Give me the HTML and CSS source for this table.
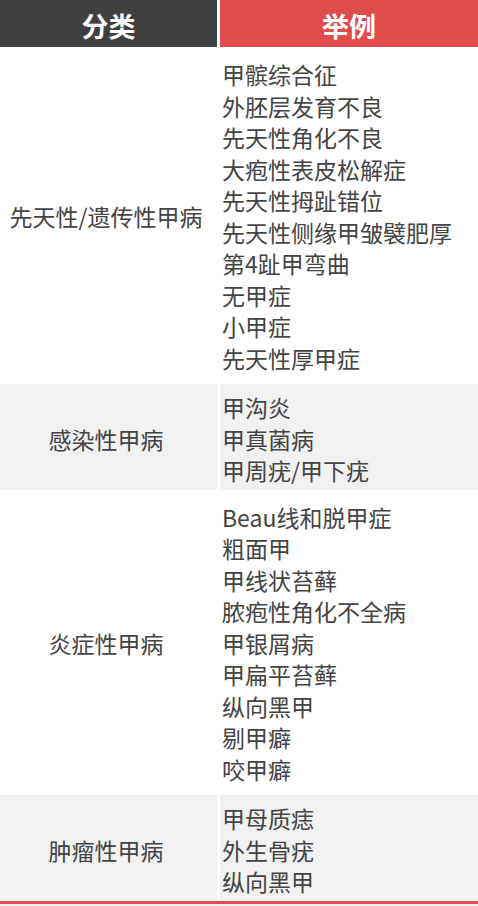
FILE: index.html
```html
<!DOCTYPE html>
<html lang="zh-CN">
<head>
<meta charset="utf-8">
<title>甲病分类</title>
<link rel="stylesheet" href="styles.css">
</head>
<body>
<div class="table">
  <div class="row head">
    <div class="cell cat">分类</div>
    <div class="cell ex">举例</div>
  </div>
  <div class="row long">
    <div class="cell cat">先天性/遗传性甲病</div>
    <div class="cell ex">
      <div>甲髌综合征</div>
      <div>外胚层发育不良</div>
      <div>先天性角化不良</div>
      <div>大疱性表皮松解症</div>
      <div>先天性拇趾错位</div>
      <div>先天性侧缘甲皱襞肥厚</div>
      <div>第4趾甲弯曲</div>
      <div>无甲症</div>
      <div>小甲症</div>
      <div>先天性厚甲症</div>
    </div>
  </div>
  <div class="row short alt">
    <div class="cell cat">感染性甲病</div>
    <div class="cell ex">
      <div>甲沟炎</div>
      <div>甲真菌病</div>
      <div>甲周疣/甲下疣</div>
    </div>
  </div>
  <div class="row long">
    <div class="cell cat">炎症性甲病</div>
    <div class="cell ex">
      <div>Beau线和脱甲症</div>
      <div>粗面甲</div>
      <div>甲线状苔藓</div>
      <div>脓疱性角化不全病</div>
      <div>甲银屑病</div>
      <div>甲扁平苔藓</div>
      <div>纵向黑甲</div>
      <div>剔甲癖</div>
      <div>咬甲癖</div>
    </div>
  </div>
  <div class="row short alt">
    <div class="cell cat">肿瘤性甲病</div>
    <div class="cell ex">
      <div>甲母质痣</div>
      <div>外生骨疣</div>
      <div>纵向黑甲</div>
    </div>
  </div>
</div>
<div class="foot"></div>
</body>
</html>
```

FILE: styles.css
```css
html, body {
  margin: 0;
  padding: 0;
  background: #ffffff;
}

body {
  font-family: "Noto Sans CJK SC", "Noto Sans", sans-serif;
  color: #444444;
  font-size: 23px;
  line-height: 31.5px;
}

.table {
  display: flex;
  flex-direction: column;
}

.row {
  display: grid;
  grid-template-columns: 217px 1fr;
  column-gap: 3px;
  background: #ffffff;
}

.cell {
  display: flex;
  flex-direction: column;
}

.cat {
  justify-content: center;
  align-items: center;
  text-align: center;
  padding-right: 5px;
}

.ex {
  padding-left: 2px;
}

.head {
  height: 47px;
}

.head .cell {
  color: #ffffff;
  font-weight: 700;
  font-size: 27px;
  padding-top: 4px;
  box-sizing: border-box;
  padding-right: 0;
}

.head .cat {
  background: #404040;
}

.head .ex {
  background: #e04b4c;
  align-items: center;
  justify-content: center;
  padding-left: 0;
}

.long .cell {
  padding-top: 12px;
  padding-bottom: 10px;
}

.short .cell {
  padding-top: 8px;
  padding-bottom: 3px;
}

.alt .cell {
  background: #f1f1f1;
}

.foot {
  border-top: 3px solid #dc5055;
  height: 20px;
  background: #efefef;
}
```
